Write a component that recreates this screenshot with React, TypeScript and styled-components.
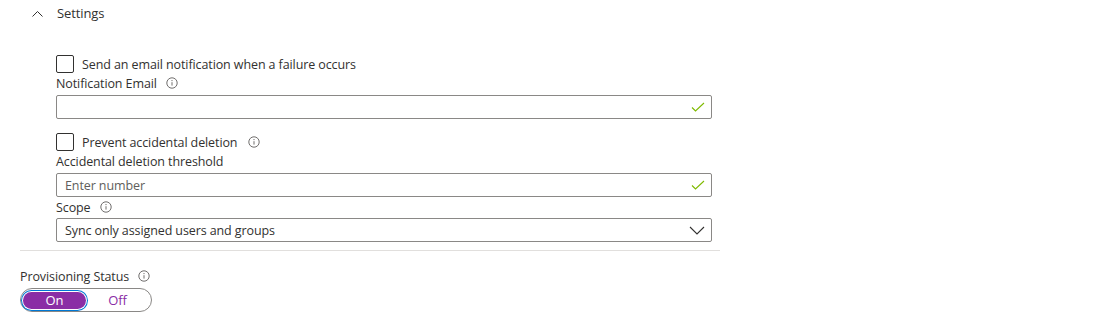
import styled, { createGlobalStyle } from "styled-components";

const GlobalStyle = createGlobalStyle`
  body {
    margin: 0;
    background: #fff;
    color: #323130;
    font-family: "Open Sans", "Noto Sans", sans-serif;
    font-size: 12.5px;
    letter-spacing: -0.1px;
  }
  * {
    box-sizing: border-box;
  }
`;

const InfoIcon = () => (
  <svg width="12" height="12" viewBox="0 0 12 12" fill="none">
    <circle cx="6" cy="6" r="5.2" stroke="#605e5c" strokeWidth="0.9" />
    <line x1="6" y1="5.2" x2="6" y2="8.6" stroke="#605e5c" strokeWidth="0.9" />
    <circle cx="6" cy="3.6" r="0.6" fill="#605e5c" />
  </svg>
);

const CheckIcon = () => (
  <svg width="14" height="10" viewBox="0 0 14 10" fill="none">
    <polyline points="1,5.5 4.5,9 13,1" stroke="#7fba00" strokeWidth="1.1" />
  </svg>
);

const ChevronDown = () => (
  <svg width="16" height="9" viewBox="0 0 16 9" fill="none">
    <polyline points="1,1 8,8 15,1" stroke="#323130" strokeWidth="1.1" />
  </svg>
);

const ChevronUp = () => (
  <svg width="11" height="7" viewBox="0 0 11 7" fill="none">
    <polyline points="0.5,6.5 5.5,1.5 10.5,6.5" stroke="#323130" strokeWidth="1" />
  </svg>
);

export default function App() {
  return (
    <>
      <GlobalStyle />
      <Page>
        <SectionHeader>
          <ChevronUp />
          <span>Settings</span>
        </SectionHeader>

        <Content>
          <CheckRow>
            <CheckBox />
            <span>Send an email notification when a failure occurs</span>
          </CheckRow>
          <FieldLabel>
            Notification Email
            <InfoIcon />
          </FieldLabel>
          <TextBox>
            <span />
            <CheckIcon />
          </TextBox>

          <CheckRow $top={14}>
            <CheckBox />
            <span>Prevent accidental deletion</span>
            <InfoIcon />
          </CheckRow>
          <FieldLabel>Accidental deletion threshold</FieldLabel>
          <TextBox>
            <Placeholder>Enter number</Placeholder>
            <CheckIcon />
          </TextBox>

          <FieldLabel $bottom={1}>
            Scope
            <InfoIcon />
          </FieldLabel>
          <TextBox>
            <span>Sync only assigned users and groups</span>
            <ChevronDown />
          </TextBox>
        </Content>

        <Divider />

        <StatusLabel>
          Provisioning Status
          <InfoIcon />
        </StatusLabel>
        <Toggle>
          <ToggleOption $active>On</ToggleOption>
          <ToggleOption>Off</ToggleOption>
        </Toggle>
      </Page>
    </>
  );
}

const Page = styled.div`
  padding-left: 20px;
  width: 720px;
`;

const SectionHeader = styled.div`
  display: flex;
  align-items: center;
  gap: 14px;
  height: 26px;
  padding-left: 12px;
  font-size: 13px;
`;

const Content = styled.div`
  display: flex;
  flex-direction: column;
  padding: 29px 0 0 36px;
  width: 692px;
`;

const CheckRow = styled.div<{ $top?: number }>`
  display: flex;
  align-items: center;
  gap: 8px;
  height: 18px;
  margin-top: ${({ $top }) => $top ?? 0}px;

  svg {
    margin-left: 3px;
  }
`;

const CheckBox = styled.span`
  width: 18px;
  height: 18px;
  border: 1px solid #323130;
  border-radius: 2px;
  flex-shrink: 0;
`;

const FieldLabel = styled.div<{ $bottom?: number }>`
  display: flex;
  align-items: center;
  gap: 9px;
  height: 20px;
  margin-bottom: ${({ $bottom }) => $bottom ?? 2}px;
`;

const TextBox = styled.div`
  display: flex;
  align-items: center;
  justify-content: space-between;
  width: 656px;
  height: 24px;
  padding: 0 6px 0 8px;
  border: 1px solid #8a8886;
  border-radius: 2px;
`;

const Placeholder = styled.span`
  color: #605e5c;
`;

const Divider = styled.div`
  width: 700px;
  margin-top: 8px;
  border-top: 1px solid #e1dfdd;
`;

const StatusLabel = styled.div`
  display: flex;
  align-items: center;
  gap: 9px;
  height: 20px;
  margin-top: 15px;
  margin-bottom: 2px;
`;

const Toggle = styled.div`
  display: flex;
  align-items: center;
  width: 132px;
  height: 24px;
  padding: 0 2px;
  border: 1px solid #8a8886;
  border-radius: 12px;
`;

const ToggleOption = styled.div<{ $active?: boolean }>`
  flex: 1;
  height: 17px;
  display: flex;
  align-items: center;
  justify-content: center;
  border-radius: 9px;
  font-size: 13px;
  color: ${({ $active }) => ($active ? "#fff" : "#8a2da5")};
  background: ${({ $active }) => ($active ? "#8a2da5" : "transparent")};
  box-shadow: ${({ $active }) =>
    $active ? "0 0 0 1px #fff, 0 0 0 2px #0078d4" : "none"};
`;
